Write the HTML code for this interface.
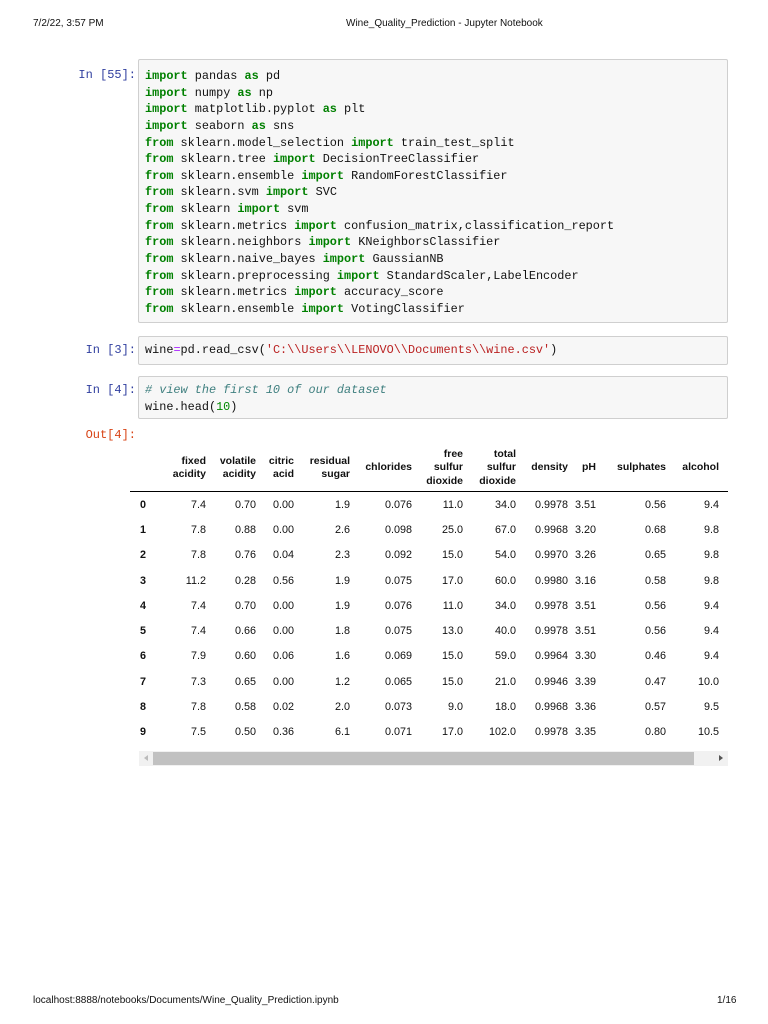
<!DOCTYPE html>
<html><head><meta charset="utf-8"><style>
body{margin:0;width:768px;height:1024px;background:#fff;position:relative;font-family:"Liberation Sans",Arial,sans-serif;overflow:hidden}
.hdr{position:absolute;top:18px;font-size:10px;color:#111}
.prompt{position:absolute;font-family:"Liberation Mono",monospace;font-size:12px;color:#303f9f;width:136px;text-align:right}
.box{position:absolute;left:138px;width:588px;border:1px solid #cfcfcf;border-radius:2px;background:#f7f7f7}
pre{margin:0;font-family:"Liberation Mono",monospace;font-size:11.85px;line-height:16.64px;color:#111;padding-left:6px}
.k{color:#008000;font-weight:bold}
.o{color:#aa22ff}
.s{color:#ba2121}
.c{color:#408080;font-style:italic}
.n{color:#080}
table{position:absolute;left:130px;top:445px;border-collapse:collapse;table-layout:fixed;font-size:10.8px;color:#111}
th,td{text-align:right;padding:0;white-space:nowrap}
th{font-weight:bold;line-height:13.5px;vertical-align:middle;height:46px;border-bottom:1px solid #000;font-size:10.5px}
td{height:25.3px}
td.i{font-weight:bold;text-align:left;padding-left:10px}
</style></head><body>
<div class="hdr" style="left:33px">7/2/22, 3:57 PM</div>
<div class="hdr" style="left:346px">Wine_Quality_Prediction - Jupyter Notebook</div>

<div class="prompt" style="left:0;top:68px">In [55]:</div>
<div class="box" style="top:59px;height:262px"><pre style="padding-top:8px"><span class="k">import</span> pandas <span class="k">as</span> pd
<span class="k">import</span> numpy <span class="k">as</span> np
<span class="k">import</span> matplotlib.pyplot <span class="k">as</span> plt
<span class="k">import</span> seaborn <span class="k">as</span> sns
<span class="k">from</span> sklearn.model_selection <span class="k">import</span> train_test_split
<span class="k">from</span> sklearn.tree <span class="k">import</span> DecisionTreeClassifier
<span class="k">from</span> sklearn.ensemble <span class="k">import</span> RandomForestClassifier
<span class="k">from</span> sklearn.svm <span class="k">import</span> SVC
<span class="k">from</span> sklearn <span class="k">import</span> svm
<span class="k">from</span> sklearn.metrics <span class="k">import</span> confusion_matrix,classification_report
<span class="k">from</span> sklearn.neighbors <span class="k">import</span> KNeighborsClassifier
<span class="k">from</span> sklearn.naive_bayes <span class="k">import</span> GaussianNB
<span class="k">from</span> sklearn.preprocessing <span class="k">import</span> StandardScaler,LabelEncoder
<span class="k">from</span> sklearn.metrics <span class="k">import</span> accuracy_score
<span class="k">from</span> sklearn.ensemble <span class="k">import</span> VotingClassifier</pre></div>

<div class="prompt" style="left:0;top:343px">In [3]:</div>
<div class="box" style="top:336px;height:27px"><pre style="padding-top:5px">wine<span class="o">=</span>pd.read_csv(<span class="s">'C:\\Users\\LENOVO\\Documents\\wine.csv'</span>)</pre></div>

<div class="prompt" style="left:0;top:383px">In [4]:</div>
<div class="box" style="top:376px;height:41px"><pre style="padding-top:5px"><span class="c"># view the first 10 of our dataset</span>
wine.head(<span class="n">10</span>)</pre></div>

<div class="prompt" style="left:0;top:428px;color:#d84315">Out[4]:</div>

<table>
<colgroup><col style="width:22px"><col style="width:54px"><col style="width:50px"><col style="width:38px"><col style="width:56px"><col style="width:62px"><col style="width:51px"><col style="width:53px"><col style="width:52px"><col style="width:28px"><col style="width:70px"><col style="width:53px"><col style="width:9px"></colgroup>
<tr><th></th><th>fixed<br>acidity</th><th>volatile<br>acidity</th><th>citric<br>acid</th><th>residual<br>sugar</th><th>chlorides</th><th>free<br>sulfur<br>dioxide</th><th>total<br>sulfur<br>dioxide</th><th>density</th><th>pH</th><th>sulphates</th><th>alcohol</th><th></th></tr>
<tr><td class="i">0</td><td>7.4</td><td>0.70</td><td>0.00</td><td>1.9</td><td>0.076</td><td>11.0</td><td>34.0</td><td>0.9978</td><td>3.51</td><td>0.56</td><td>9.4</td><td></td></tr>
<tr><td class="i">1</td><td>7.8</td><td>0.88</td><td>0.00</td><td>2.6</td><td>0.098</td><td>25.0</td><td>67.0</td><td>0.9968</td><td>3.20</td><td>0.68</td><td>9.8</td><td></td></tr>
<tr><td class="i">2</td><td>7.8</td><td>0.76</td><td>0.04</td><td>2.3</td><td>0.092</td><td>15.0</td><td>54.0</td><td>0.9970</td><td>3.26</td><td>0.65</td><td>9.8</td><td></td></tr>
<tr><td class="i">3</td><td>11.2</td><td>0.28</td><td>0.56</td><td>1.9</td><td>0.075</td><td>17.0</td><td>60.0</td><td>0.9980</td><td>3.16</td><td>0.58</td><td>9.8</td><td></td></tr>
<tr><td class="i">4</td><td>7.4</td><td>0.70</td><td>0.00</td><td>1.9</td><td>0.076</td><td>11.0</td><td>34.0</td><td>0.9978</td><td>3.51</td><td>0.56</td><td>9.4</td><td></td></tr>
<tr><td class="i">5</td><td>7.4</td><td>0.66</td><td>0.00</td><td>1.8</td><td>0.075</td><td>13.0</td><td>40.0</td><td>0.9978</td><td>3.51</td><td>0.56</td><td>9.4</td><td></td></tr>
<tr><td class="i">6</td><td>7.9</td><td>0.60</td><td>0.06</td><td>1.6</td><td>0.069</td><td>15.0</td><td>59.0</td><td>0.9964</td><td>3.30</td><td>0.46</td><td>9.4</td><td></td></tr>
<tr><td class="i">7</td><td>7.3</td><td>0.65</td><td>0.00</td><td>1.2</td><td>0.065</td><td>15.0</td><td>21.0</td><td>0.9946</td><td>3.39</td><td>0.47</td><td>10.0</td><td></td></tr>
<tr><td class="i">8</td><td>7.8</td><td>0.58</td><td>0.02</td><td>2.0</td><td>0.073</td><td>9.0</td><td>18.0</td><td>0.9968</td><td>3.36</td><td>0.57</td><td>9.5</td><td></td></tr>
<tr><td class="i">9</td><td>7.5</td><td>0.50</td><td>0.36</td><td>6.1</td><td>0.071</td><td>17.0</td><td>102.0</td><td>0.9978</td><td>3.35</td><td>0.80</td><td>10.5</td><td></td></tr>
</table>

<div style="position:absolute;left:139px;top:751px;width:589px;height:15px;background:#f1f1f1"></div>
<div style="position:absolute;left:153px;top:752px;width:541px;height:13px;background:#c1c1c1"></div>
<div style="position:absolute;left:144px;top:755px;width:0;height:0;border-top:3px solid transparent;border-bottom:3px solid transparent;border-right:4px solid #bbb"></div>
<div style="position:absolute;left:719px;top:755px;width:0;height:0;border-top:3px solid transparent;border-bottom:3px solid transparent;border-left:4px solid #555"></div>

<div class="hdr" style="left:33px;top:995px">localhost:8888/notebooks/Documents/Wine_Quality_Prediction.ipynb</div>
<div class="hdr" style="left:717px;top:995px">1/16</div>
</body></html>
